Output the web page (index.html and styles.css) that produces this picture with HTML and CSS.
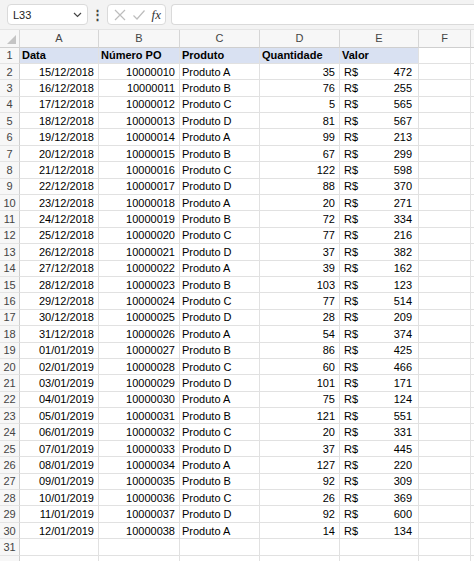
FILE: index.html
```html
<!DOCTYPE html>
<html>
<head>
<meta charset="utf-8">
<link rel="stylesheet" href="styles.css">
</head>
<body>
<div class="fbar">
  <div class="namebox"><span>L33</span>
    <svg class="chev" width="9" height="6" viewBox="0 0 9 6"><path d="M1 1 L4.5 4.5 L8 1" fill="none" stroke="#444" stroke-width="1.2"/></svg>
  </div>
  <div class="dots">⋮</div>
  <div class="fbtns">
    <svg width="14" height="14" viewBox="0 0 14 14"><path d="M2 2 L12 12 M12 2 L2 12" stroke="#bdbdbd" stroke-width="1.2" fill="none"/></svg>
    <svg width="14" height="14" viewBox="0 0 14 14"><path d="M1.5 7.5 L5 11 L12.5 2.5" stroke="#bdbdbd" stroke-width="1.2" fill="none"/></svg>
    <span class="fx">fx</span>
  </div>
  <div class="finput"></div>
</div>
<div class="sheet">
  <div class="row hdr">
    <div class="c rh corner"><svg width="9" height="9" viewBox="0 0 9 9"><path d="M9 0 L9 9 L0 9 Z" fill="#c4c4c4"/></svg></div>
    <div class="c a">A</div><div class="c b">B</div><div class="c cc">C</div><div class="c d">D</div><div class="c e">E</div><div class="c f">F</div><div class="c g"></div>
  </div>
  <div class="row head">
    <div class="c rh">1</div>
    <div class="c a bl l">Data</div><div class="c b bl l">Número PO</div><div class="c cc bl l">Produto</div><div class="c d bl l">Quantidade</div><div class="c e bl l">Valor</div><div class="c f"></div><div class="c g"></div>
  </div>
  <div class="row"><div class="c rh">2</div><div class="c a r">15/12/2018</div><div class="c b r">10000010</div><div class="c cc l">Produto A</div><div class="c d r">35</div><div class="c e acc"><span>R$</span><span>472</span></div><div class="c f"></div><div class="c g"></div></div>
  <div class="row"><div class="c rh">3</div><div class="c a r">16/12/2018</div><div class="c b r">10000011</div><div class="c cc l">Produto B</div><div class="c d r">76</div><div class="c e acc"><span>R$</span><span>255</span></div><div class="c f"></div><div class="c g"></div></div>
  <div class="row"><div class="c rh">4</div><div class="c a r">17/12/2018</div><div class="c b r">10000012</div><div class="c cc l">Produto C</div><div class="c d r">5</div><div class="c e acc"><span>R$</span><span>565</span></div><div class="c f"></div><div class="c g"></div></div>
  <div class="row"><div class="c rh">5</div><div class="c a r">18/12/2018</div><div class="c b r">10000013</div><div class="c cc l">Produto D</div><div class="c d r">81</div><div class="c e acc"><span>R$</span><span>567</span></div><div class="c f"></div><div class="c g"></div></div>
  <div class="row"><div class="c rh">6</div><div class="c a r">19/12/2018</div><div class="c b r">10000014</div><div class="c cc l">Produto A</div><div class="c d r">99</div><div class="c e acc"><span>R$</span><span>213</span></div><div class="c f"></div><div class="c g"></div></div>
  <div class="row"><div class="c rh">7</div><div class="c a r">20/12/2018</div><div class="c b r">10000015</div><div class="c cc l">Produto B</div><div class="c d r">67</div><div class="c e acc"><span>R$</span><span>299</span></div><div class="c f"></div><div class="c g"></div></div>
  <div class="row"><div class="c rh">8</div><div class="c a r">21/12/2018</div><div class="c b r">10000016</div><div class="c cc l">Produto C</div><div class="c d r">122</div><div class="c e acc"><span>R$</span><span>598</span></div><div class="c f"></div><div class="c g"></div></div>
  <div class="row"><div class="c rh">9</div><div class="c a r">22/12/2018</div><div class="c b r">10000017</div><div class="c cc l">Produto D</div><div class="c d r">88</div><div class="c e acc"><span>R$</span><span>370</span></div><div class="c f"></div><div class="c g"></div></div>
  <div class="row"><div class="c rh">10</div><div class="c a r">23/12/2018</div><div class="c b r">10000018</div><div class="c cc l">Produto A</div><div class="c d r">20</div><div class="c e acc"><span>R$</span><span>271</span></div><div class="c f"></div><div class="c g"></div></div>
  <div class="row"><div class="c rh">11</div><div class="c a r">24/12/2018</div><div class="c b r">10000019</div><div class="c cc l">Produto B</div><div class="c d r">72</div><div class="c e acc"><span>R$</span><span>334</span></div><div class="c f"></div><div class="c g"></div></div>
  <div class="row"><div class="c rh">12</div><div class="c a r">25/12/2018</div><div class="c b r">10000020</div><div class="c cc l">Produto C</div><div class="c d r">77</div><div class="c e acc"><span>R$</span><span>216</span></div><div class="c f"></div><div class="c g"></div></div>
  <div class="row"><div class="c rh">13</div><div class="c a r">26/12/2018</div><div class="c b r">10000021</div><div class="c cc l">Produto D</div><div class="c d r">37</div><div class="c e acc"><span>R$</span><span>382</span></div><div class="c f"></div><div class="c g"></div></div>
  <div class="row"><div class="c rh">14</div><div class="c a r">27/12/2018</div><div class="c b r">10000022</div><div class="c cc l">Produto A</div><div class="c d r">39</div><div class="c e acc"><span>R$</span><span>162</span></div><div class="c f"></div><div class="c g"></div></div>
  <div class="row"><div class="c rh">15</div><div class="c a r">28/12/2018</div><div class="c b r">10000023</div><div class="c cc l">Produto B</div><div class="c d r">103</div><div class="c e acc"><span>R$</span><span>123</span></div><div class="c f"></div><div class="c g"></div></div>
  <div class="row"><div class="c rh">16</div><div class="c a r">29/12/2018</div><div class="c b r">10000024</div><div class="c cc l">Produto C</div><div class="c d r">77</div><div class="c e acc"><span>R$</span><span>514</span></div><div class="c f"></div><div class="c g"></div></div>
  <div class="row"><div class="c rh">17</div><div class="c a r">30/12/2018</div><div class="c b r">10000025</div><div class="c cc l">Produto D</div><div class="c d r">28</div><div class="c e acc"><span>R$</span><span>209</span></div><div class="c f"></div><div class="c g"></div></div>
  <div class="row"><div class="c rh">18</div><div class="c a r">31/12/2018</div><div class="c b r">10000026</div><div class="c cc l">Produto A</div><div class="c d r">54</div><div class="c e acc"><span>R$</span><span>374</span></div><div class="c f"></div><div class="c g"></div></div>
  <div class="row"><div class="c rh">19</div><div class="c a r">01/01/2019</div><div class="c b r">10000027</div><div class="c cc l">Produto B</div><div class="c d r">86</div><div class="c e acc"><span>R$</span><span>425</span></div><div class="c f"></div><div class="c g"></div></div>
  <div class="row"><div class="c rh">20</div><div class="c a r">02/01/2019</div><div class="c b r">10000028</div><div class="c cc l">Produto C</div><div class="c d r">60</div><div class="c e acc"><span>R$</span><span>466</span></div><div class="c f"></div><div class="c g"></div></div>
  <div class="row"><div class="c rh">21</div><div class="c a r">03/01/2019</div><div class="c b r">10000029</div><div class="c cc l">Produto D</div><div class="c d r">101</div><div class="c e acc"><span>R$</span><span>171</span></div><div class="c f"></div><div class="c g"></div></div>
  <div class="row"><div class="c rh">22</div><div class="c a r">04/01/2019</div><div class="c b r">10000030</div><div class="c cc l">Produto A</div><div class="c d r">75</div><div class="c e acc"><span>R$</span><span>124</span></div><div class="c f"></div><div class="c g"></div></div>
  <div class="row"><div class="c rh">23</div><div class="c a r">05/01/2019</div><div class="c b r">10000031</div><div class="c cc l">Produto B</div><div class="c d r">121</div><div class="c e acc"><span>R$</span><span>551</span></div><div class="c f"></div><div class="c g"></div></div>
  <div class="row"><div class="c rh">24</div><div class="c a r">06/01/2019</div><div class="c b r">10000032</div><div class="c cc l">Produto C</div><div class="c d r">20</div><div class="c e acc"><span>R$</span><span>331</span></div><div class="c f"></div><div class="c g"></div></div>
  <div class="row"><div class="c rh">25</div><div class="c a r">07/01/2019</div><div class="c b r">10000033</div><div class="c cc l">Produto D</div><div class="c d r">37</div><div class="c e acc"><span>R$</span><span>445</span></div><div class="c f"></div><div class="c g"></div></div>
  <div class="row"><div class="c rh">26</div><div class="c a r">08/01/2019</div><div class="c b r">10000034</div><div class="c cc l">Produto A</div><div class="c d r">127</div><div class="c e acc"><span>R$</span><span>220</span></div><div class="c f"></div><div class="c g"></div></div>
  <div class="row"><div class="c rh">27</div><div class="c a r">09/01/2019</div><div class="c b r">10000035</div><div class="c cc l">Produto B</div><div class="c d r">92</div><div class="c e acc"><span>R$</span><span>309</span></div><div class="c f"></div><div class="c g"></div></div>
  <div class="row"><div class="c rh">28</div><div class="c a r">10/01/2019</div><div class="c b r">10000036</div><div class="c cc l">Produto C</div><div class="c d r">26</div><div class="c e acc"><span>R$</span><span>369</span></div><div class="c f"></div><div class="c g"></div></div>
  <div class="row"><div class="c rh">29</div><div class="c a r">11/01/2019</div><div class="c b r">10000037</div><div class="c cc l">Produto D</div><div class="c d r">92</div><div class="c e acc"><span>R$</span><span>600</span></div><div class="c f"></div><div class="c g"></div></div>
  <div class="row"><div class="c rh">30</div><div class="c a r">12/01/2019</div><div class="c b r">10000038</div><div class="c cc l">Produto A</div><div class="c d r">14</div><div class="c e acc"><span>R$</span><span>134</span></div><div class="c f"></div><div class="c g"></div></div>
  <div class="row"><div class="c rh">31</div><div class="c a"></div><div class="c b"></div><div class="c cc"></div><div class="c d"></div><div class="c e"></div><div class="c f"></div><div class="c g"></div></div>
  <div class="row"><div class="c rh"></div><div class="c a"></div><div class="c b"></div><div class="c cc"></div><div class="c d"></div><div class="c e"></div><div class="c f"></div><div class="c g"></div></div>
</div>
</body>
</html>
```

FILE: styles.css
```css
* { box-sizing: border-box; }
html, body { margin: 0; padding: 0; }
body {
  width: 474px;
  height: 561px;
  overflow: hidden;
  background: #ffffff;
  font-family: "Liberation Sans", Arial, sans-serif;
  font-size: 11px;
  color: #000;
}
.fbar {
  height: 30px;
  background: #f3f3f3;
  display: flex;
  align-items: center;
  padding-left: 7px;
  border-bottom: 1px solid #e4e4e4;
  overflow: hidden;
}
.namebox {
  width: 81px;
  height: 21px;
  background: #fff;
  border: 1px solid #dadada;
  border-radius: 4px;
  display: flex;
  align-items: center;
  justify-content: space-between;
  padding: 0 5px 0 5px;
  font-size: 11px;
  color: #222;
}
.dots {
  width: 19px;
  text-align: center;
  font-size: 13px;
  color: #444;
  font-weight: bold;
}
.fbtns {
  width: 59px;
  height: 21px;
  background: #fff;
  border: 1px solid #dadada;
  border-radius: 4px;
  display: flex;
  align-items: center;
  justify-content: space-between;
  padding: 0 4px 0 5px;
}
.fx {
  font-family: "Liberation Serif", "Times New Roman", serif;
  font-style: italic;
  font-size: 13px;
  color: #333;
}
.finput {
  flex: 1;
  height: 21px;
  margin-left: 5px;
  background: #fff;
  border: 1px solid #dadada;
  border-right: none;
  border-radius: 4px 0 0 4px;
}
.sheet { display: flex; flex-direction: column; width: 474px; overflow: hidden; }
.row {
  display: flex;
  height: 16.4px;
  flex: none;
  width: 474px;
}
.row.hdr { height: 17.5px; background: #f7f7f7; }
.c {
  flex: none;
  height: 100%;
  border-right: 1px solid #e1e1e1;
  border-bottom: 1px solid #e1e1e1;
  display: flex;
  align-items: center;
  white-space: nowrap;
  overflow: hidden;
  padding: 0 3px;
}
.rh {
  width: 20px;
  justify-content: center;
  padding: 0;
  color: #444;
  background: #f7f7f7;
  border-right: 1px solid #cfcfcf;
  border-bottom-color: #e4e4e4;
}
.hdr .c {
  justify-content: center;
  color: #444;
  border-bottom: 1px solid #cfcfcf;
  border-right-color: #d6d6d6;
}
.corner { align-items: flex-end; justify-content: flex-end !important; padding: 0 3px 3px 0; }
.a { width: 79px; }
.b { width: 81px; }
.cc { width: 80px; }
.d { width: 80px; }
.e { width: 79px; }
.f { width: 52px; }
.g { flex: 1 1 auto; min-width: 0; border-right: none; }
.r { justify-content: flex-end; padding-right: 4px; }
.l { justify-content: flex-start; padding-left: 2px; }
.bl { background: #d9e1f2; font-weight: bold; }
.acc { justify-content: space-between; padding-left: 4px; padding-right: 6px; }
```
